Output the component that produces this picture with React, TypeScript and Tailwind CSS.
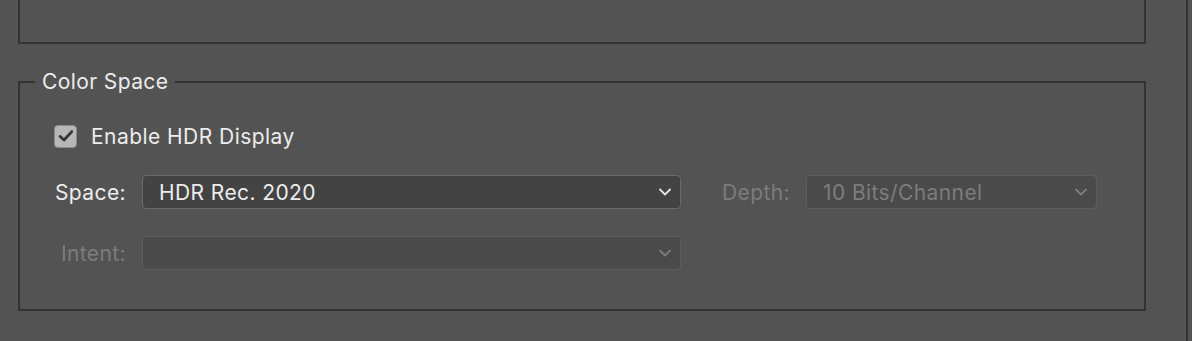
import React from 'react';

const font = { fontFamily: 'Inter, "Noto Sans", sans-serif' };

function Chevron({ className }: { className: string }) {
  return (
    <svg className={className} fill="none" height="10" viewBox="0 0 14 10" width="14">
      <path d="M2 2.5 L7 7.5 L12 2.5" stroke="currentColor" strokeLinecap="round" strokeLinejoin="round" strokeWidth="1.8" />
    </svg>
  );
}

function Select({
  value,
  disabled,
  className,
}: {
  value?: string;
  disabled?: boolean;
  className: string;
}) {
  return (
    <div
      className={`flex h-[34px] items-center justify-between rounded-[4px] border pl-[16px] pr-[8px] ${
        disabled
          ? 'border-[#5d5d5d] bg-[#4a4a4a] text-[#7c7c7c]'
          : 'border-[#6a6a6a] bg-[#434343] text-[#ececec]'
      } ${className}`}
    >
      <span className="text-[21px] leading-none tracking-[0.4px]">{value}</span>
      <Chevron className={disabled ? 'text-[#7c7c7c]' : 'text-[#e6e6e6]'} />
    </div>
  );
}

export default function App() {
  return (
    <div className="flex h-[341px] w-[1192px] overflow-hidden bg-[#535353]" style={font}>
      <div className="w-[1186px]">
        <div className="ml-[18px] h-[44px] w-[1128px] border-x-2 border-b-2 border-[#333333]" />

        <fieldset className="ml-[18px] mt-[26px] h-[241px] w-[1128px] border-2 border-[#333333]">
          <legend className="ml-[15px] px-[7px] text-[21px] leading-[24px] tracking-[0.4px] text-[#ececec]">
            Color Space
          </legend>

          <div className="flex flex-col pl-[34px] pt-[30px]">
            <label className="flex h-[24px] items-center gap-[14px]">
              <span className="flex h-[23px] w-[23px] items-center justify-center rounded-[4px] border border-[#8c8c8c] bg-[#b7b7b7]">
                <svg fill="none" height="14" viewBox="0 0 16 14" width="16">
                  <path d="M2.2 7.4 L6 11 L13.8 2.6" stroke="#353535" strokeLinecap="round" strokeLinejoin="round" strokeWidth="2.8" />
                </svg>
              </span>
              <span className="text-[21px] leading-none tracking-[0.45px] text-[#ececec]">Enable HDR Display</span>
            </label>
          </div>

          <div className="mt-[27px] flex items-center">
            <span className="w-[106px] text-right text-[21px] leading-none tracking-[0.4px] text-[#ececec]">Space:</span>
            <Select className="ml-[16px] w-[539px]" value="HDR Rec. 2020" />
            <span className="ml-[41px] w-[68px] text-right text-[21px] leading-none tracking-[0.4px] text-[#7c7c7c]">Depth:</span>
            <Select className="ml-[16px] w-[291px]" disabled value="10 Bits/Channel" />
          </div>

          <div className="mt-[27px] flex items-center">
            <span className="w-[106px] text-right text-[21px] leading-none tracking-[0.4px] text-[#7c7c7c]">Intent:</span>
            <Select className="ml-[16px] w-[539px]" disabled />
          </div>
        </fieldset>
      </div>
      <div className="w-[2px] bg-[#333333]" />
    </div>
  );
}
